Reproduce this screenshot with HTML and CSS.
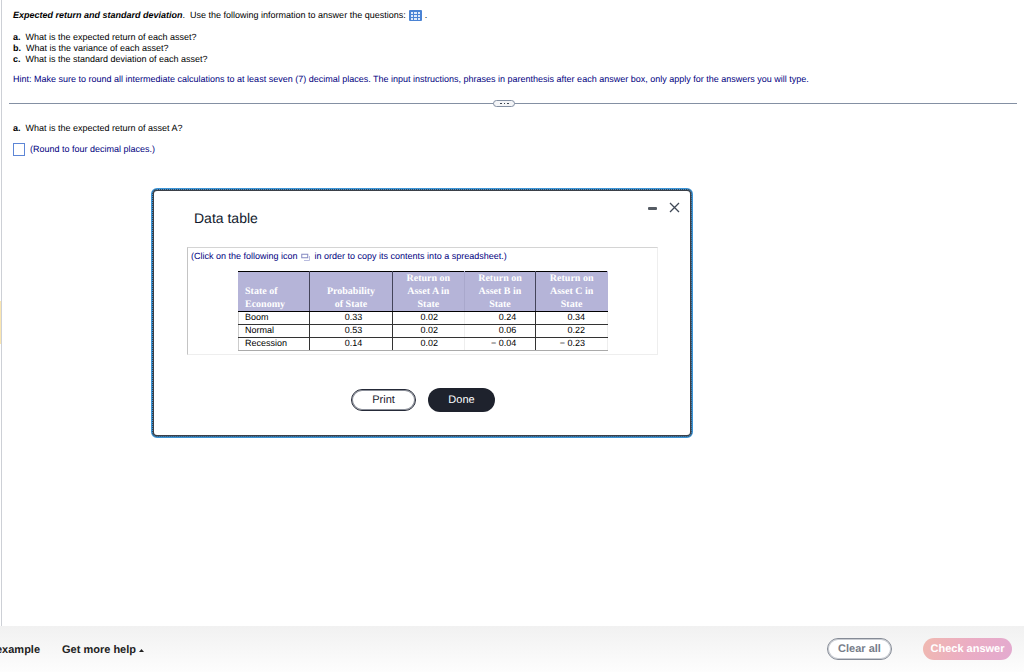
FILE: index.html
```
<!DOCTYPE html>
<html lang="en">
<head>
<meta charset="utf-8">
<title>Expected return and standard deviation</title>
<link rel="stylesheet" href="styles.css">
</head>
<body>
<main class="question">
  <p class="intro"><strong class="topic">Expected return and standard deviation</strong>.&nbsp; Use the following information to answer the questions:
    <button class="icon-button" type="button" aria-label="Open data table"><svg class="grid-icon" viewBox="0 0 13 11" width="13" height="11"><rect width="13" height="11" rx="1" fill="#4a83d4"/><path d="M2 2h2v2H2zM5 2h3v2H5zM9 2h2v2H9zM2 5h2v2H2zM5 5h3v2H5zM9 5h2v2H9zM2 8h2v2H2zM5 8h3v2H5zM9 8h2v2H9z" fill="#dfeafa"/></svg></button> .</p>
  <div class="parts">
    <p><b>a.</b>&nbsp; What is the expected return of each asset?</p>
    <p><b>b.</b>&nbsp; What is the variance of each asset?</p>
    <p><b>c.</b>&nbsp; What is the standard deviation of each asset?</p>
  </div>
  <p class="hint">Hint: Make sure to round all intermediate calculations to at least seven (7) decimal places. The input instructions, phrases in parenthesis after each answer box, only apply for the answers you will type.</p>
  <div class="divider">
    <button class="handle" type="button" aria-label="Resize question"><svg viewBox="0 0 9 1" width="9" height="1"><path d="M0 0h2v1H0zM4 0h1v1H4zM7 0h2v1H7z" fill="#3d4652"/></svg></button>
  </div>
  <p class="prompt"><b>a.</b>&nbsp; What is the expected return of asset A?</p>
  <div class="answer">
    <input class="answer-box" id="answer" type="text">
    <label for="answer">(Round to four decimal places.)</label>
  </div>
</main>
<span class="side-tab"></span>

<section class="dialog" role="dialog" aria-labelledby="dialog-title">
  <header class="dialog-head">
    <h2 class="dialog-title" id="dialog-title">Data table</h2>
    <div class="window-controls">
      <button class="icon-button" type="button" aria-label="Minimize"><svg viewBox="0 0 11 11" width="11" height="11"><rect x="1" y="5" width="9" height="3" rx="1" fill="#555b63"/></svg></button>
      <button class="icon-button" type="button" aria-label="Close"><svg viewBox="0 0 11 11" width="11" height="11"><path d="M1 1l9 9M10 1l-9 9" stroke="#3f4856" stroke-width="1.3" fill="none"/></svg></button>
    </div>
  </header>
  <div class="sheet">
    <p class="copy-note">(Click on the following icon
      <button class="icon-button copy" type="button" aria-label="Copy to spreadsheet"><svg viewBox="0 0 9 8" width="9" height="8"><path d="M3 7.5h5.500V3" fill="none" stroke="#b9bcdf"/><rect x=".75" y="1.250" width="6" height="3.500" fill="#fff" stroke="#8389c1"/></svg></button>
      in order to copy its contents into a spreadsheet.)</p>
    <table class="data">
      <thead>
        <tr><th class="state">State of<br>Economy</th><th class="prob">Probability<br>of State</th><th class="soft">Return on<br>Asset A in<br>State</th><th>Return on<br>Asset B in<br>State</th><th class="last">Return on<br>Asset C in<br>State</th></tr>
      </thead>
      <tbody>
        <tr><td class="state">Boom</td><td class="prob">0.33</td><td class="soft">0.02</td><td class="signed">0.24</td><td class="signed last">0.34</td></tr>
        <tr><td class="state">Normal</td><td class="prob">0.53</td><td class="soft">0.02</td><td class="signed">0.06</td><td class="signed last">0.22</td></tr>
        <tr><td class="state">Recession</td><td class="prob">0.14</td><td class="soft">0.02</td><td class="signed">− 0.04</td><td class="signed last">− 0.23</td></tr>
      </tbody>
    </table>
  </div>
  <div class="actions">
    <button class="pill print" type="button">Print</button>
    <button class="pill done" type="button">Done</button>
  </div>
</section>

<footer class="toolbar">
  <div class="links">
    <a class="example" href="#">example</a>
    <a class="help" href="#">Get more help <svg viewBox="0 0 5 3" width="5" height="3"><path d="M0 3L2.500 0 5 3z" fill="#222"/></svg></a>
  </div>
  <div class="buttons">
    <button class="foot-button clear" type="button">Clear all</button>
    <button class="foot-button check" type="button">Check answer</button>
  </div>
</footer>
</body>
</html>
```
FILE: styles.css
```
* { box-sizing: border-box; }
html { height: 100%; }
body {
  margin: 0;
  min-height: 100%;
  display: flex;
  flex-direction: column;
  position: relative;
  overflow-x: hidden;
  background: #fff;
  color: #000;
  font: 9px/11px "Liberation Sans", Arial, sans-serif;
  text-rendering: geometricPrecision;
}
p, h2 { margin: 0; }
button, input { font: inherit; margin: 0; padding: 0; text-rendering: inherit; }
svg { display: block; }

.question {
  flex: 1;
  margin-left: 1px;
  padding: 10px 7px 0 11px;
  border-left: 1px solid #cdd0d6;
}
.topic { font-style: italic; }
.icon-button {
  display: inline-block;
  border: 0;
  background: none;
  vertical-align: middle;
}
.intro { height: 11px; white-space: nowrap; }
.intro .icon-button { margin: -1px 0 0 1px; }
.parts { margin-top: 11px; }
.hint { margin-top: 9px; color: #000080; }
.divider {
  display: flex;
  align-items: center;
  justify-content: center;
  height: 7px;
  margin: 15px 0 0 -4px;
  background: linear-gradient(#8490a3, #8490a3) center / 100% 1px no-repeat;
}
.handle {
  display: flex;
  align-items: center;
  justify-content: center;
  width: 22px;
  height: 7px;
  margin-right: 18px;
  border: 1px solid #8490a3;
  border-radius: 4px;
  background: #f4f5f7;
}
.prompt { margin-top: 16px; }
.answer {
  display: flex;
  align-items: center;
  gap: 5px;
  margin-top: 9px;
  color: #000080;
}
.answer-box {
  width: 12px;
  height: 13px;
  border: 1px solid #5d86d6;
  background: #fff;
}
.side-tab {
  position: absolute;
  top: 301px;
  left: 0;
  width: 1px;
  height: 43px;
  background: #fbe6b0;
}

.dialog {
  position: absolute;
  top: 188px;
  left: 151px;
  width: 542px;
  padding: 9px 11px 24px 34px;
  border: 2px solid #3c94d6;
  border-radius: 6px;
  background: #fff;
}
.dialog::before {
  content: "";
  position: absolute;
  inset: -1px;
  border: 2px solid #3b4048;
  border-radius: 5px;
  pointer-events: none;
}
.dialog::after {
  content: "";
  position: absolute;
  inset: -1px;
  border: 1px dotted #3c94d6;
  border-radius: 5px;
  pointer-events: none;
}
.dialog-head {
  display: flex;
  justify-content: space-between;
  padding-left: 7px;
}
.dialog-title {
  padding-top: 11px;
  color: #10182c;
  font-size: 14px;
  font-weight: 400;
  line-height: 16px;
}
.window-controls {
  display: flex;
  gap: 11px;
  height: 11px;
  margin: 3px 0 0;
}
.window-controls .icon-button { height: 11px; }
.sheet {
  width: 471px;
  margin-top: 21px;
  padding: 3px 0 3px 3px;
  border: 1px solid #eeeeee;
  border-top-color: #d4d4d4;
  border-left-color: #c4c4c4;
}
.copy-note { height: 11px; color: #000080; white-space: nowrap; }
.copy { margin: 0 2px 0 1px; }

.data {
  width: 370px;
  margin: 9px 0 0 47px;
  border-collapse: collapse;
  table-layout: fixed;
}
.data th {
  height: 40px;
  padding: 0;
  border: 1px solid #000;
  border-right-color: #44445a;
  border-left-color: #b5b4d8;
  background: #b5b4d8;
  color: #fff;
  font: bold 10px/13px "Liberation Serif", "Times New Roman", serif;
  vertical-align: bottom;
}
.data th.state { width: 71px; }
.data th.prob { width: 83px; }
.data td {
  height: 13px;
  padding: 0 0 1px;
  border: 1px solid #333;
  line-height: 11px;
  text-align: center;
}
.data .state { padding-left: 6px; text-align: left; }
.data td.state { border-left-color: #ccc; }
.data td.prob { padding-left: 5px; }
.data td.soft { padding-left: 2px; }
.data td.signed { padding-right: 19px; text-align: right; }
.data td.last { padding-right: 22px; }
.data th.soft { border-right-color: #a9a8cc; }
.data td.soft { border-right-color: #eee; }
.data th.last { border-right-color: #b5b4d8; }
.data td.last { border-right-color: #eee; }
.data tbody tr:last-child td { border-bottom-color: #aaa; }

.actions {
  display: flex;
  align-items: center;
  justify-content: center;
  gap: 12px;
  margin-top: 33px;
  padding-right: 21px;
}
.pill {
  border-radius: 12px;
  font-size: 11px;
  line-height: 14px;
}
.print {
  width: 65px;
  height: 22px;
  border: 1px solid #252a38;
  box-shadow: inset 0 0 0 1px #8a8e98;
  background: #fff;
  color: #1c2230;
}
.done {
  width: 67px;
  height: 24px;
  border: 0;
  background: #1e222d;
  color: #fff;
}

.toolbar {
  display: flex;
  align-items: center;
  justify-content: space-between;
  height: 46px;
  padding: 0 12px 0 0;
  background: linear-gradient(#f1f1f1, #fdfdfd);
  font-size: 11px;
  font-weight: 700;
  line-height: 14px;
}
.links { display: flex; gap: 22px; padding-top: 2px; margin-left: -4px; }
.links a {
  display: flex;
  align-items: center;
  gap: 3px;
  color: #222;
  text-decoration: none;
}
.buttons { display: flex; gap: 31px; }
.foot-button {
  height: 22px;
  border-radius: 11px;
}
.clear {
  width: 65px;
  border: 1px solid #858b96;
  box-shadow: inset 0 0 0 1px #c9ccd2;
  background: #fff;
  color: #777d89;
}
.check {
  width: 89px;
  border: 0;
  background: linear-gradient(110deg, #f0b9b0, #ebadc4 50%, #e3aad0);
  color: #fff;
}
```
